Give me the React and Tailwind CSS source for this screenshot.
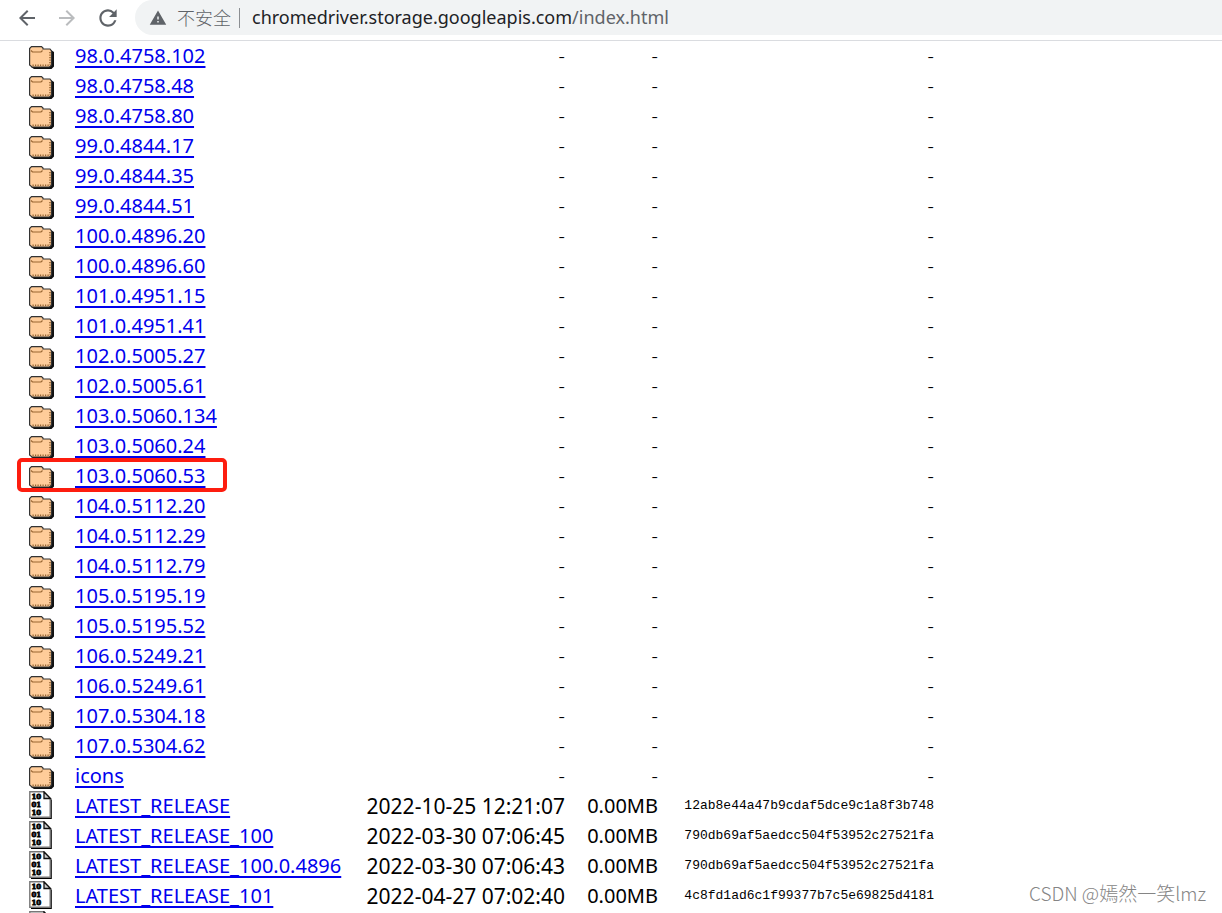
import React from 'react';
import { MdArrowBack, MdArrowForward, MdRefresh, MdWarning } from 'react-icons/md';

const folders = [
  '98.0.4758.102',
  '98.0.4758.48',
  '98.0.4758.80',
  '99.0.4844.17',
  '99.0.4844.35',
  '99.0.4844.51',
  '100.0.4896.20',
  '100.0.4896.60',
  '101.0.4951.15',
  '101.0.4951.41',
  '102.0.5005.27',
  '102.0.5005.61',
  '103.0.5060.134',
  '103.0.5060.24',
  '103.0.5060.53',
  '104.0.5112.20',
  '104.0.5112.29',
  '104.0.5112.79',
  '105.0.5195.19',
  '105.0.5195.52',
  '106.0.5249.21',
  '106.0.5249.61',
  '107.0.5304.18',
  '107.0.5304.62',
  'icons',
];

const files = [
  { name: 'LATEST_RELEASE', date: '2022-10-25 12:21:07', size: '0.00MB', etag: '12ab8e44a47b9cdaf5dce9c1a8f3b748' },
  { name: 'LATEST_RELEASE_100', date: '2022-03-30 07:06:45', size: '0.00MB', etag: '790db69af5aedcc504f53952c27521fa' },
  { name: 'LATEST_RELEASE_100.0.4896', date: '2022-03-30 07:06:43', size: '0.00MB', etag: '790db69af5aedcc504f53952c27521fa' },
  { name: 'LATEST_RELEASE_101', date: '2022-04-27 07:02:40', size: '0.00MB', etag: '4c8fd1ad6c1f99377b7c5e69825d4181' },
];

const HIGHLIGHTED = '103.0.5060.53';

const FolderIcon = () => (
  <svg width="25" height="28" viewBox="0 0 25 28" className="block" aria-hidden="true">
    <path d="M3 9 H22 L25 11 V25.5 L22.5 28 H5 L2 26 Z" fill="#111" />
    <path d="M0.6 10 V24 L3 26 H20.5 L22.5 24 V10 L21 8 H14 V7 L12.5 5.6 H2.5 L0.6 7.5 Z" fill="#ffcc99" stroke="#333" strokeWidth="1.2" />
    <path d="M2 9.5 L3.5 11 H12 L13.5 9.5" fill="none" stroke="#996633" strokeWidth="1.2" />
    <path d="M3.5 24.2 H21" stroke="#996633" strokeWidth="1.6" strokeDasharray="1.2 1.3" />
    <path d="M21 11 V24" stroke="#996633" strokeWidth="1.6" strokeDasharray="1.2 1.3" />
  </svg>
);

const BinaryIcon = ({ blank = false }) => (
  <svg width="25" height="28" viewBox="0 0 25 28" className="block" aria-hidden="true">
    <path d="M2 3 H17 L22.8 9 V28 H2 Z" fill="#000" />
    <path d="M0.8 0.8 H15 L21.2 7.3 V26.2 H0.8 Z" fill="#fff" stroke="#777" strokeWidth="1.4" />
    <path d="M15 1 V7.5 H21.5 Z" fill="#ccc" stroke="#111" strokeWidth="1.3" />
    {!blank && (
      <g fontFamily="DejaVu Serif, serif" fontWeight="700" fontSize="7" fill="#000" stroke="#000" strokeWidth="0.8">
        <text x="2.4" y="7.6">10</text>
        <text x="2.4" y="15.8">01</text>
        <text x="2.4" y="24">10</text>
      </g>
    )}
  </svg>
);

const Row = ({ icon, name, date, size = '-', etag }) => (
  <tr className="h-[30px]">
    <td className="relative p-0 align-top">
      {icon}
      {name === HIGHLIGHTED && (
        <span className="pointer-events-none absolute -left-3 -top-[3px] h-[34px] w-[210px] rounded-[5px] border-4 border-[#fd1d0f]" />
      )}
    </td>
    <td className="p-0">
      <a href={`#${name}`} className="text-[#0000ee] underline decoration-2 underline-offset-3 [text-decoration-skip-ink:none]">{name}</a>
    </td>
    <td className={date ? 'p-0 text-right text-[21px]' : 'p-0 text-right font-light'}>{date || '-'}</td>
    <td className={size === '-' ? 'p-0 text-right font-light' : 'p-0 text-right'}>{size}</td>
    <td className={etag ? 'p-0 text-right font-["Liberation_Mono",monospace] text-[13px]' : 'p-0 text-right font-light'}>{etag || '-'}</td>
  </tr>
);

const Toolbar = () => (
  <header className="flex h-[41px] items-start border-b border-[#dadce0] pl-[15px] text-[#5f6368]">
    <div className="flex h-[35px] items-center gap-4">
      <button type="button" aria-label="Back"><MdArrowBack size={24} /></button>
      <button type="button" aria-label="Forward" className="text-[#babcbe]"><MdArrowForward size={24} /></button>
      <button type="button" aria-label="Reload"><MdRefresh size={26} /></button>
    </div>
    <div className="ml-[14px] flex h-[35px] flex-1 items-center rounded-l-full bg-[#f1f3f4] pl-[14px] text-[18px] whitespace-nowrap">
      <MdWarning size={18} />
      <span className="ml-[10px] font-['Noto_Sans_CJK_SC',sans-serif] font-light">不安全</span>
      <span className="mx-2 h-5 w-px bg-[#8b8e92]" />
      <div className="ml-1">
        <span className="text-[#202124]">chromedriver.storage.googleapis.com</span>/index.html
      </div>
    </div>
  </header>
);

const App = () => (
  <div className="relative h-screen overflow-hidden bg-white font-['Noto_Sans','Noto_Sans_CJK_SC',sans-serif] text-black">
    <Toolbar />
    <main className="pl-[29px]">
      <table className="w-[905px] table-fixed border-collapse text-[20px] leading-[30px] whitespace-nowrap">
        <colgroup>
          <col className="w-[46px]" />
          <col className="w-[280px]" />
          <col className="w-[210px]" />
          <col className="w-[93px]" />
          <col />
        </colgroup>
        <tbody>
          {folders.map(name => <Row key={name} icon={<FolderIcon />} name={name} />)}
          {files.map(f => <Row key={f.name} icon={<BinaryIcon />} {...f} />)}
          <tr>
            <td className="p-0 align-top" colSpan={5}><BinaryIcon blank /></td>
          </tr>
        </tbody>
      </table>
    </main>
    <div className="absolute right-4 bottom-[6px] font-['Noto_Sans_CJK_SC',sans-serif] text-[19px] font-light text-[#858585]">
      CSDN @嫣然一笑lmz
    </div>
  </div>
);

export default App;
